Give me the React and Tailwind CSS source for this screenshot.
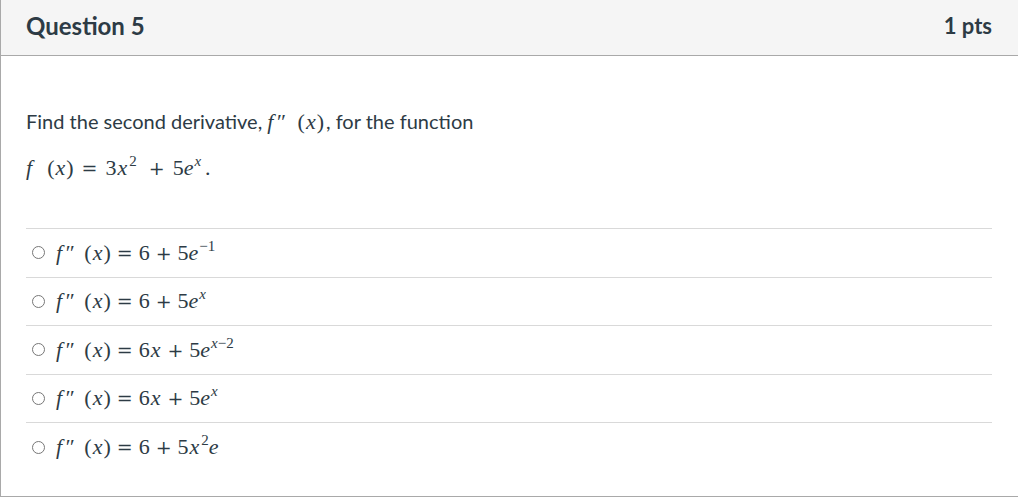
import React from "react";

const SERIF = '"Liberation Serif", "DejaVu Serif", serif';

const M = ({ children }) => (
  <span className="text-[22px] leading-none whitespace-nowrap" style={{ fontFamily: SERIF }}>
    {children}
  </span>
);
const I = ({ children }) => <span className="italic">{children}</span>;
const X = () => <span className="italic mx-[1px]">x</span>;
const Sup = ({ children }) => (
  <span className="text-[15px] leading-none relative -top-[9px] ml-[1px]">{children}</span>
);
const Op = ({ children, wide }) => (
  <span className={`text-[19px] ${wide ? "mx-[8px]" : "mx-[6px]"}`} style={{ fontFamily: '"DejaVu Serif", serif' }}>
    {children}
  </span>
);

const FPP = ({ wide }) => (
  <>
    <I>f</I>
    <span className="italic ml-[2px]">″</span>
    <span className={wide ? "ml-[13px]" : "ml-[11px]"}>(</span>
    <X />
    <span className={wide ? "mr-[2px]" : ""}>)</span>
  </>
);

const options = [
  <>
    <FPP />
    <Op>=</Op>6<Op>+</Op>5<I>e</I>
    <Sup>−1</Sup>
  </>,
  <>
    <FPP />
    <Op>=</Op>6<Op>+</Op>5<I>e</I>
    <Sup>
      <I>x</I>
    </Sup>
  </>,
  <>
    <FPP />
    <Op>=</Op>6<X />
    <Op>+</Op>5<I>e</I>
    <Sup>
      <I>x</I>−2
    </Sup>
  </>,
  <>
    <FPP />
    <Op>=</Op>6<X />
    <Op>+</Op>5<I>e</I>
    <Sup>
      <I>x</I>
    </Sup>
  </>,
  <>
    <FPP />
    <Op>=</Op>6<Op>+</Op>5<X />
    <Sup>2</Sup>
    <I>e</I>
  </>,
];

export default function App() {
  return (
    <div
      className="w-[1018px] h-[498px] bg-white text-[#2d3b45] overflow-hidden"
      style={{ fontFamily: 'Lato, "Liberation Sans", sans-serif' }}
    >
      <div className="h-[497px] border-l border-b border-[#a9a9a9] flex flex-col">
        <div className="h-[56px] shrink-0 bg-[#f5f5f5] border-b border-[#a9a9a9] flex items-center justify-between pl-[25px] pr-[26px]">
          <div className="text-[24px] font-bold pb-[4px]">Question 5</div>
          <div className="text-[22px] font-bold pb-[4px]">1 pts</div>
        </div>
        <div className="pl-[25px] pr-[26px] pt-[52px]">
          <p className="text-[20px] leading-[26px] h-[26px]">
            Find the second derivative,{" "}
            <M>
              <FPP wide />
            </M>
            , for the function
          </p>
          <p className="mt-[22px] h-[26px] leading-[26px]">
            <M>
              <I>f</I>
              <span className="ml-[15px]">(</span>
              <X />
              <span>)</span>
              <Op wide>=</Op>3<X />
              <Sup>2</Sup>
              <span className="ml-[4px]" />
              <Op wide>+</Op>5<I>e</I>
              <Sup>
                <I>x</I>
              </Sup>
              <span className="ml-[4px]">.</span>
            </M>
          </p>
          <div className="mt-[46px] border-t border-[#d9d9d9]">
            {options.map((o, i) => (
              <div key={i} className="h-[48.5px] border-b border-[#d9d9d9] last:border-b-0 flex items-center">
                <span className="w-[13px] h-[13px] rounded-full border border-[#777777] ml-[6px] mr-[11px] shrink-0" />
                <M>{o}</M>
              </div>
            ))}
          </div>
        </div>
      </div>
    </div>
  );
}
